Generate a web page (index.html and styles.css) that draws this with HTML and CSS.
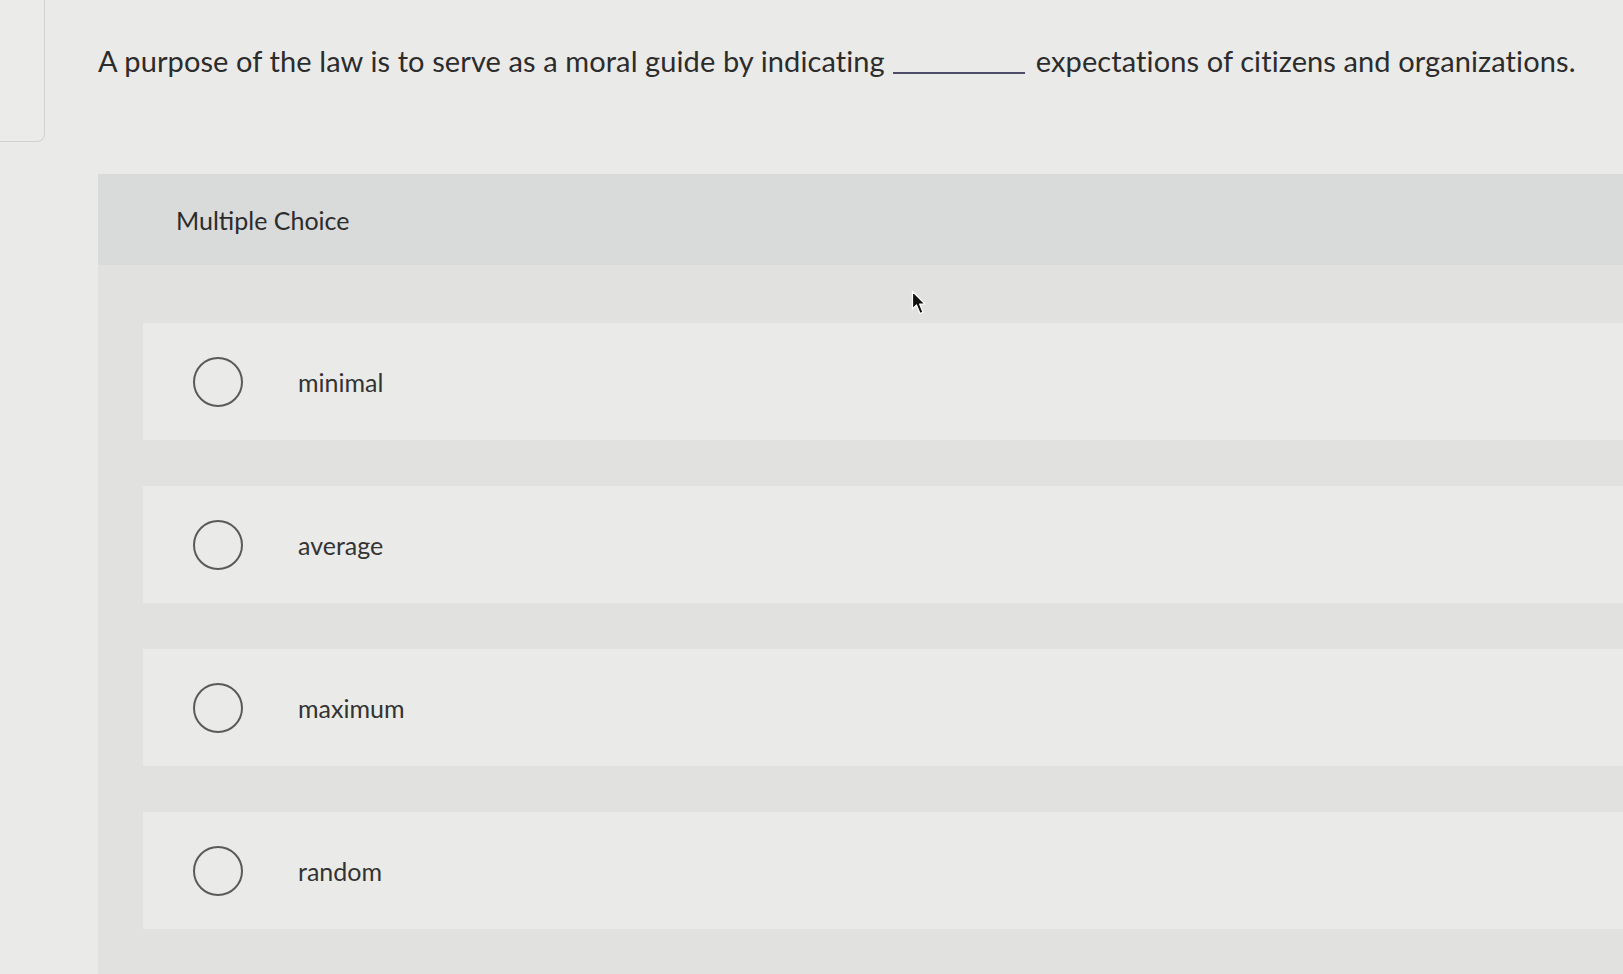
FILE: index.html
```html
<!DOCTYPE html>
<html lang="en">
  <head>
    <meta charset="UTF-8" />
    <meta name="viewport" content="width=device-width, initial-scale=1.0" />
    <title>Multiple Choice</title>
    <link rel="stylesheet" href="styles.css">
  </head>
  <body>
    <div class="layout">
      <div class="side">
        <div class="side-tab"></div>
      </div>

      <div class="main">
        <p class="question">
          A purpose of the law is to serve as a moral guide by indicating
          <span class="blank"></span>
          expectations of citizens and organizations.
        </p>

        <div class="choice-panel">
          <div class="choice-header">Multiple Choice</div>

          <div class="choice-list">
            <label class="choice">
              <span class="radio"></span>
              <span class="choice-text">minimal</span>
            </label>
            <label class="choice">
              <span class="radio"></span>
              <span class="choice-text">average</span>
            </label>
            <label class="choice">
              <span class="radio"></span>
              <span class="choice-text">maximum</span>
            </label>
            <label class="choice">
              <span class="radio"></span>
              <span class="choice-text">random</span>
            </label>
          </div>

          <!-- mouse pointer sitting over the panel -->
          <svg class="cursor" width="16" height="26" viewBox="0 0 16 26">
            <path d="M1.5 1.5 L1.5 19 L5.5 15 L9 23.5 L12 22.2 L8.6 14 L14 14 Z"
                  fill="#111" stroke="#fff" stroke-width="1.2" stroke-linejoin="round" />
          </svg>
        </div>
      </div>
    </div>
  </body>
</html>
```

FILE: styles.css
```css
body {
  margin: 0;
  background-color: #eaeae8;
  font-family: Lato, "Open Sans", sans-serif;
  color: #2c2c2c;
  overflow: hidden;
}

.layout {
  display: flex;
  height: 100vh;
}

.side {
  width: 45px;
  flex-shrink: 0;
}

.side-tab {
  height: 141px;
  border-right: 1px solid #d2d2d0;
  border-bottom: 1px solid #d2d2d0;
  border-bottom-right-radius: 8px;
  background-color: #ebebe9;
}

.main {
  flex: 1;
  display: flex;
  flex-direction: column;
  margin-left: 53px;
  min-width: 0;
}

.question {
  margin: 0;
  padding-top: 43px;
  height: 174px;
  flex-shrink: 0;
  box-sizing: border-box;
  font-size: 29px;
  line-height: 36px;
  white-space: nowrap;
  letter-spacing: 0.1px;
}

.blank {
  display: inline-block;
  width: 132px;
  height: 2px;
  margin: 0 3px 0 1px;
  background-color: #4c4c66;
  vertical-align: -2px;
}

.choice-panel {
  position: relative;
  flex: 1;
  background-color: #e1e1e0;
}

.choice-header {
  height: 91px;
  display: flex;
  align-items: center;
  padding-left: 78px;
  background-color: #d9dada;
  font-size: 25px;
}

.choice-list {
  display: flex;
  flex-direction: column;
  gap: 46px;
  padding: 58px 0 0 45px;
}

.choice {
  height: 117px;
  display: flex;
  align-items: center;
  padding-left: 50px;
  background-color: #eaeae9;
  cursor: pointer;
}

.radio {
  width: 46px;
  height: 46px;
  border: 2px solid #5a5a5a;
  border-radius: 50%;
  flex-shrink: 0;
}

.choice-text {
  margin-left: 55px;
  font-size: 25px;
  color: #333;
}

.cursor {
  position: absolute;
  left: 813px;
  top: 116px;
}
```
